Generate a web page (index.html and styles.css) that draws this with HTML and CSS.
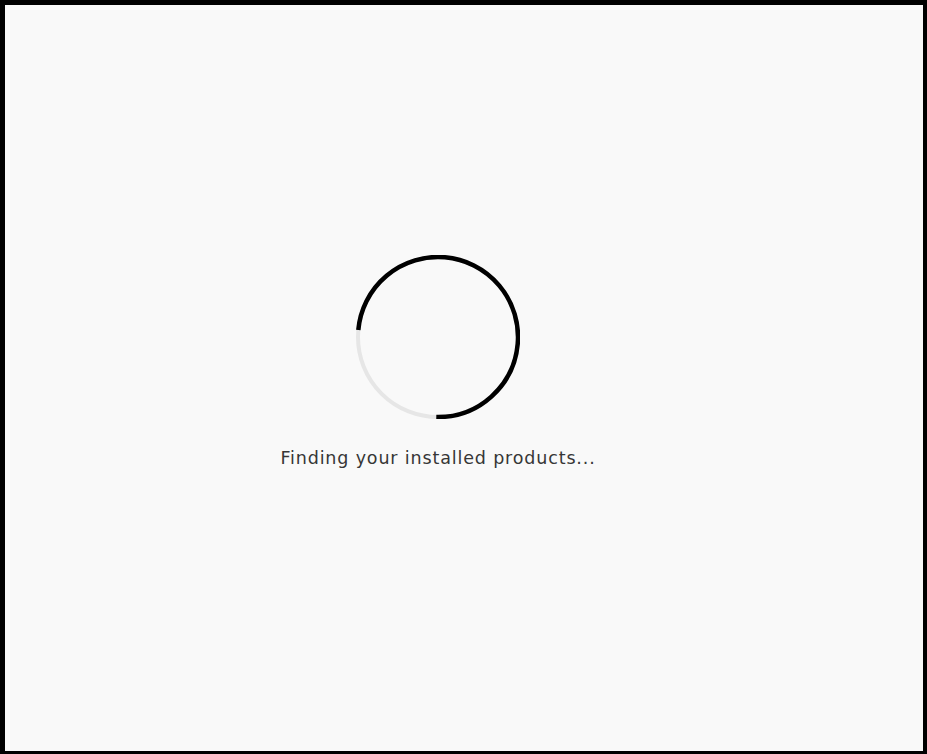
FILE: index.html
```html
<!DOCTYPE html>
<html lang="en">
<head>
<meta charset="utf-8">
<title>Finding your installed products</title>
<link rel="stylesheet" href="styles.css">
</head>
<body>
<div class="frame">
  <div class="loader">
    <svg class="spinner" width="164" height="164" viewBox="0 0 164 164">
      <circle class="track" cx="82" cy="82" r="80"></circle>
      <circle class="arc" cx="82" cy="82" r="80" transform="rotate(185 82 82)"></circle>
    </svg>
    <p class="message">Finding your installed products...</p>
  </div>
</div>
</body>
</html>
```
FILE: styles.css
```css
html, body {
  margin: 0;
  padding: 0;
  height: 100%;
}
body {
  background: #000;
  overflow: hidden;
}
.frame {
  box-sizing: border-box;
  margin: 5px 4px 0 5px;
  height: 746px;
  background: #f9f9f9;
  display: flex;
  flex-direction: column;
  align-items: center;
  padding-top: 250px;
  padding-right: 52px;
}
.loader {
  display: flex;
  flex-direction: column;
  align-items: center;
}
.spinner {
  display: block;
}
.track {
  fill: none;
  stroke: #e6e6e6;
  stroke-width: 4;
}
.arc {
  fill: none;
  stroke: #000;
  stroke-width: 4.5;
  stroke-dasharray: 371 502;
}
.message {
  margin: 27px 0 0 0;
  font-family: "DejaVu Sans", "Noto Sans", sans-serif;
  font-size: 17.5px;
  line-height: 24px;
  letter-spacing: 0.85px;
  color: #363636;
}
```
